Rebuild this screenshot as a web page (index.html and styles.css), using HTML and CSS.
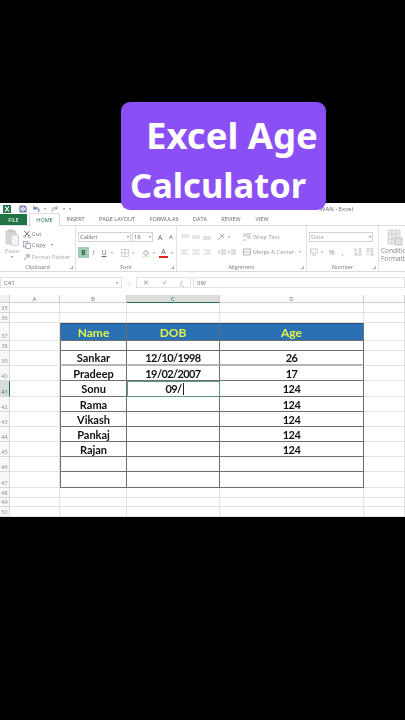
FILE: index.html
```html
<!DOCTYPE html>
<html lang="en">
<head>
<meta charset="utf-8">
<title>Excel Age Calculator</title>
<link rel="stylesheet" href="styles.css">
</head>
<body>
<div class="screen">
  <div class="banner">
    <div class="banner-one">Excel Age</div>
    <div class="banner-two">Calculator</div>
  </div>
  <main class="excel">
    <div class="titlebar">
      <svg class="xl" viewBox="0 0 8 8"><rect width="8" height="8" fill="#1f7246"/><path d="M2 1.5 6 6.5M6 1.5 2 6.5" stroke="#fff" stroke-width="1.2"/></svg>
      <svg class="qa" viewBox="0 0 8 8"><path d="M1 1h5l1 1v5H1z" fill="none" stroke="#51618a"/><path d="M2.5 1v2h3V1M2.5 7V5h3v2" fill="none" stroke="#51618a" stroke-width=".6"/></svg>
      <svg class="qa" viewBox="0 0 8 8"><path d="M2 1v3h3M2 4c1-2 4-2 5 1 0 1-.5 2-1 2" fill="none" stroke="#3f5f9a" stroke-width="1"/></svg>
      <span class="drop">▾</span>
      <svg class="qa faint" viewBox="0 0 8 8"><path d="M6 1v3H3M6 4C5 2 2 2 1 5c0 1 .5 2 1 2" fill="none" stroke="#8d9ab5" stroke-width="1"/></svg>
      <span class="drop">▾</span>
      <span class="drop">▾</span>
      <span class="doc-title">WAN - Excel</span>
    </div>
    <nav class="tabs">
      <span class="tab file">FILE</span>
      <span class="tab home">HOME</span>
      <span class="tab t-insert">INSERT</span>
      <span class="tab t-page">PAGE LAYOUT</span>
      <span class="tab t-form">FORMULAS</span>
      <span class="tab t-data">DATA</span>
      <span class="tab t-rev">REVIEW</span>
      <span class="tab t-view">VIEW</span>
    </nav>
    <section class="ribbon">
      <div class="group g-clip">
        <div class="group-body clip-body">
          <div class="paste">
            <svg class="paste-ico" viewBox="0 0 14 17"><rect x="1" y="2" width="10" height="13" fill="#d8d8d8" stroke="#bbb" stroke-width=".6"/><rect x="3.5" y="0.5" width="5" height="3" fill="#c4c4c4"/><rect x="6" y="6" width="7.5" height="10.5" fill="#f3f3f3" stroke="#bdbdbd" stroke-width=".6"/></svg>
            <span>Paste</span>
            <span class="drop">▾</span>
          </div>
          <div class="clip-list">
            <div class="clip-item"><svg class="mini" viewBox="0 0 8 8"><path d="M1.5 1 6 6M6.500 1 2 6" stroke="#6b6b6b" fill="none"/><circle cx="1.6" cy="6.6" r="1" fill="none" stroke="#6b6b6b" stroke-width=".6"/><circle cx="6.4" cy="6.6" r="1" fill="none" stroke="#6b6b6b" stroke-width=".6"/></svg><span>Cut</span></div>
            <div class="clip-item"><svg class="mini" viewBox="0 0 8 8"><rect x=".5" y=".5" width="4.5" height="5.5" fill="#eef" stroke="#8a93aa" stroke-width=".7"/><rect x="3" y="2.5" width="4.5" height="5" fill="#fff" stroke="#8a93aa" stroke-width=".7"/></svg><span>Copy</span><span class="drop">▾</span></div>
            <div class="clip-item off"><svg class="mini" viewBox="0 0 8 8"><path d="M1 7 4 3.500M3 1.500l3.500 3M5 1l2 2" stroke="#a9a9a9" stroke-width="1.1" fill="none"/></svg><span>Format Painter</span></div>
          </div>
        </div>
        <div class="group-label">Clipboard<i class="launch"></i></div>
      </div>
      <div class="group g-font">
        <div class="group-body stack">
          <div class="line">
            <span class="combo font-name">Calibri<span class="drop">▾</span></span>
            <span class="combo font-size">18<span class="drop">▾</span></span>
            <span class="grow-a">A<sup>ˆ</sup></span>
            <span class="grow-a small-a">A<sup>ˇ</sup></span>
          </div>
          <div class="line font-btns">
            <span class="btn bold">B</span>
            <span class="btn ital">I</span>
            <span class="btn under">U</span>
            <span class="drop">▾</span>
            <svg class="mini border-ico" viewBox="0 0 8 8"><path d="M.5.5h7v7h-7zM4 .5v7M.5 4h7" fill="none" stroke="#bdbdbd" stroke-width=".7"/></svg>
            <span class="drop">▾</span>
            <svg class="mini fill-ico" viewBox="0 0 8 8"><path d="M4 1 7 4 4 7 1 4z" fill="#e8e8e8" stroke="#a8a8a8" stroke-width=".7"/><rect y="7" width="8" height="1" fill="#e8e8c8"/></svg>
            <span class="drop">▾</span>
            <span class="font-color">A</span>
            <span class="drop">▾</span>
          </div>
        </div>
        <div class="group-label">Font<i class="launch"></i></div>
      </div>
      <div class="group g-align">
        <div class="group-body stack">
          <div class="line">
            <svg class="lines" viewBox="0 0 8 6"><path d="M0 1h8M0 3h8" stroke="#d0d0d0"/></svg>
            <svg class="lines" viewBox="0 0 8 6"><path d="M0 2h8M0 4h8" stroke="#d0d0d0"/></svg>
            <svg class="lines" viewBox="0 0 8 6"><path d="M0 3h8M0 5h8" stroke="#c4c4c4"/></svg>
            <svg class="mini orient" viewBox="0 0 8 8"><path d="M1 7 7 1M3 1l4 4" stroke="#a8a8a8" fill="none"/></svg>
            <span class="drop">▾</span>
            <svg class="mini wrap-ico" viewBox="0 0 8 8"><path d="M0 1h8M0 3h6c2 0 2 2 0 2H4M0 7h3" stroke="#a5a5a5" fill="none" stroke-width=".8"/></svg>
            <span class="off-text">Wrap Text</span>
          </div>
          <div class="line">
            <svg class="lines" viewBox="0 0 8 6"><path d="M0 1h8M0 3h5M0 5h8" stroke="#c8c8c8" stroke-width=".8"/></svg>
            <svg class="lines" viewBox="0 0 8 6"><path d="M0 1h8M1.500 3h5M0 5h8" stroke="#c8c8c8" stroke-width=".8"/></svg>
            <svg class="lines" viewBox="0 0 8 6"><path d="M0 1h8M3 3h5M0 5h8" stroke="#c8c8c8" stroke-width=".8"/></svg>
            <svg class="lines indent" viewBox="0 0 8 6"><path d="M3 1h5M3 3h5M3 5h5M2 1.500 0 3l2 1.500" stroke="#b0b0b0" stroke-width=".8" fill="none"/></svg>
            <svg class="lines indent2" viewBox="0 0 8 6"><path d="M3 1h5M3 3h5M3 5h5M0 1.500 2 3 0 4.500" stroke="#b0b0b0" stroke-width=".8" fill="none"/></svg>
            <svg class="mini merge-ico" viewBox="0 0 8 8"><path d="M.5 1h7v6h-7zM.5 4h7" fill="none" stroke="#9a9a9a" stroke-width=".7"/></svg>
            <span class="off-text">Merge &amp; Center</span>
            <span class="drop">▾</span>
          </div>
        </div>
        <div class="group-label">Alignment<i class="launch"></i></div>
      </div>
      <div class="group g-num">
        <div class="group-body stack">
          <div class="line">
            <span class="combo num-fmt">Date<span class="drop">▾</span></span>
          </div>
          <div class="line num-btns">
            <svg class="mini" viewBox="0 0 8 8"><rect x=".5" y="1" width="7" height="4" fill="none" stroke="#b5b5b5" stroke-width=".7"/><path d="M2 7h4" stroke="#c9c9a0"/></svg>
            <span class="drop">▾</span>
            <span class="pct">%</span>
            <span class="pct comma">,</span>
            <svg class="mini dec-one" viewBox="0 0 8 8"><path d="M0 2h3M1.500.5v3M5 .5h2v3H5zM1 5h2v2.500H1zM5 5h2v2.500H5z" fill="none" stroke="#b0b0b0" stroke-width=".6"/></svg>
            <svg class="mini dec-two" viewBox="0 0 8 8"><path d="M1 .5h2v3H1zM5 .5h2v3H5zM5 5h2v2.500H5zM0 6.200h3" fill="none" stroke="#b0b0b0" stroke-width=".6"/></svg>
          </div>
        </div>
        <div class="group-label">Number<i class="launch"></i></div>
      </div>
      <div class="group g-style">
        <svg class="cond-ico" viewBox="0 0 16 17"><rect x="1" y="1" width="12" height="14" fill="#ececec" stroke="#c0c0c0" stroke-width=".6"/><path d="M5 1v14M9 1v14M1 5h12M1 10h12" stroke="#c0c0c0" stroke-width=".6"/><rect x="8" y="9" width="7" height="7" fill="#e3e3e3" stroke="#a8a8a8" stroke-width=".6"/></svg>
        <span class="cond-text">Conditional<br>Formatting</span>
      </div>
    </section>
    <div class="formula">
      <div class="namebox"><span>C41</span><span class="drop">▾</span></div>
      <span class="dots">⋮</span>
      <div class="fx-btns">
        <span class="fx">✕</span>
        <span class="fx">✓</span>
        <span class="fx italic">f<sub>x</sub></span>
      </div>
      <div class="fbox">09/</div>
    </div>
    <div class="sheet">
      <div class="row h8 colheads"><div class="c corner"></div><div class="c">A</div><div class="c">B</div><div class="c active-col">C</div><div class="c">D</div><div class="c"></div></div>
      <div class="row h10"><div class="c rh">35</div><div class="c"></div><div class="c"></div><div class="c"></div><div class="c"></div><div class="c"></div></div>
      <div class="row h10"><div class="c rh">36</div><div class="c"></div><div class="c"></div><div class="c"></div><div class="c"></div><div class="c"></div></div>
      <div class="row h18"><div class="c rh">37</div><div class="c"></div><div class="c t th first">Name</div><div class="c t th">DOB</div><div class="c t th">Age</div><div class="c"></div></div>
      <div class="row h10"><div class="c rh">38</div><div class="c"></div><div class="c t first"></div><div class="c t"></div><div class="c t"></div><div class="c"></div></div>
      <div class="row h15 heavy"><div class="c rh">39</div><div class="c"></div><div class="c t first">Sankar</div><div class="c t num">12/10/1998</div><div class="c t num">26</div><div class="c"></div></div>
      <div class="row h15"><div class="c rh">40</div><div class="c"></div><div class="c t first">Pradeep</div><div class="c t num">19/02/2007</div><div class="c t num">17</div><div class="c"></div></div>
      <div class="row h16"><div class="c rh active-row">41</div><div class="c"></div><div class="c t first">Sonu</div><div class="c t num active"><span class="edit">09/</span></div><div class="c t num">124</div><div class="c"></div></div>
      <div class="row h15"><div class="c rh">42</div><div class="c"></div><div class="c t first">Rama</div><div class="c t"></div><div class="c t num">124</div><div class="c"></div></div>
      <div class="row h15"><div class="c rh">43</div><div class="c"></div><div class="c t first">Vikash</div><div class="c t"></div><div class="c t num">124</div><div class="c"></div></div>
      <div class="row h15"><div class="c rh">44</div><div class="c"></div><div class="c t first">Pankaj</div><div class="c t"></div><div class="c t num">124</div><div class="c"></div></div>
      <div class="row h15"><div class="c rh">45</div><div class="c"></div><div class="c t first">Rajan</div><div class="c t"></div><div class="c t num">124</div><div class="c"></div></div>
      <div class="row h15"><div class="c rh">46</div><div class="c"></div><div class="c t first"></div><div class="c t"></div><div class="c t"></div><div class="c"></div></div>
      <div class="row h16"><div class="c rh">47</div><div class="c"></div><div class="c t first"></div><div class="c t"></div><div class="c t"></div><div class="c"></div></div>
      <div class="row h10"><div class="c rh">48</div><div class="c"></div><div class="c"></div><div class="c"></div><div class="c"></div><div class="c"></div></div>
      <div class="row h9"><div class="c rh">49</div><div class="c"></div><div class="c"></div><div class="c"></div><div class="c"></div><div class="c"></div></div>
      <div class="row h10"><div class="c rh">50</div><div class="c"></div><div class="c"></div><div class="c"></div><div class="c"></div><div class="c"></div></div>
    </div>
  </main>
</div>
</body>
</html>
```
FILE: styles.css
```css
* { box-sizing: border-box; }
html, body { margin: 0; padding: 0; background: #000; }
.screen { position: relative; width: 405px; height: 720px; padding-top: 203px; background: #000; overflow: hidden; font-family: "Open Sans", "Liberation Sans", sans-serif; }

.banner { position: absolute; left: 121px; top: 102px; width: 205px; height: 108px; border-radius: 9px; background: #8b50f5; color: #fff; font-family: "Noto Sans", sans-serif; font-weight: 700; z-index: 2; }
.banner-one { font-size: 36.500px; line-height: 40px; padding: 13px 0 0 25px; white-space: nowrap; }
.banner-two { font-size: 34.500px; line-height: 40px; padding: 10px 0 0 9px; white-space: nowrap; }

.excel { height: 314px; background: #fff; display: flex; flex-direction: column; color: #777; font-size: 6px; filter: blur(.25px); }
.drop { display: inline-block; width: 3px; text-align: center; font-size: 4px; color: #888; line-height: 1; flex: none; }

.titlebar { height: 10px; display: flex; align-items: center; gap: 3px; padding: 1px 0 0 3px; flex: none; }
.xl { width: 8px; height: 8px; margin-right: 3px; }
.qa { width: 8px; height: 8px; margin-left: 2px; }
.doc-title { margin-left: auto; margin-right: 52px; font-size: 6px; color: #666; white-space: nowrap; }

.tabs { height: 13px; flex: none; display: flex; align-items: stretch; border-bottom: 1px solid #dcdcdc; font-size: 5.500px; color: #666; }
.tab { display: flex; align-items: center; justify-content: center; white-space: nowrap; flex: none; }
.file { width: 27px; margin-top: 1px; background: #217346; color: #fff; }
.home { width: 31px; margin-left: 2px; color: #217346; border: 1px solid #dcdcdc; border-bottom: 1px solid #fff; height: 14px; background: #fff; }
.t-insert { margin-left: 7px; width: 17px; }
.t-page { margin-left: 15px; width: 36px; }
.t-form { margin-left: 14px; width: 30px; }
.t-data { margin-left: 14px; width: 14px; }
.t-rev { margin-left: 14px; width: 20px; }
.t-view { margin-left: 14px; width: 14px; }

.ribbon { height: 46px; flex: none; display: flex; border-bottom: 1px solid #dcdcdc; }
.group { flex: none; display: flex; flex-direction: column; border-right: 1px solid #e2e2e2; }
.group-body { flex: 1; min-height: 0; }
.group-label { height: 9px; font-size: 5.500px; color: #777; display: flex; align-items: center; justify-content: center; position: relative; }
.launch { position: absolute; right: 2px; bottom: 2px; width: 3px; height: 3px; border-right: 1px solid #aaa; border-bottom: 1px solid #aaa; }
.g-clip { width: 76px; }
.g-font { width: 101px; }
.g-align { width: 130px; }
.g-num { width: 72px; }
.g-style { flex: 1; border-right: 0; padding: 3px 0 0 2px; overflow: hidden; display: flex; flex-direction: column; align-items: flex-start; }

.clip-body { display: flex; padding: 3px 0 0 4px; }
.paste { width: 16px; display: flex; flex-direction: column; align-items: center; color: #aaa; font-size: 5.500px; }
.paste-ico { width: 14px; height: 17px; margin-bottom: 1px; }
.clip-list { display: flex; flex-direction: column; margin-left: 3px; gap: 1px; }
.clip-item { display: flex; align-items: center; gap: 1px; height: 11px; white-space: nowrap; font-size: 5.800px; color: #6d6d6d; }
.clip-item .drop { margin-left: 4px; }
.clip-item.off { color: #aaa; font-size: 5.500px; }
.mini { width: 8px; height: 8px; flex: none; }

.stack { display: flex; flex-direction: column; gap: 5px; padding: 6px 0 0 2px; }
.line { display: flex; align-items: center; height: 10px; flex: none; white-space: nowrap; }
.combo { height: 10px; border: 1px solid #d4d4d4; display: flex; align-items: center; justify-content: space-between; padding: 0 1px; font-size: 5.800px; color: #666; }
.font-name { width: 53px; }
.font-size { width: 21px; margin-left: 1px; }
.grow-a { margin-left: 5px; font-size: 7px; color: #666; }
.grow-a sup { font-size: 4px; line-height: 0; }
.small-a { margin-left: 5px; font-size: 6px; }
.font-btns { height: 11px; }
.btn { width: 6px; height: 11px; display: flex; align-items: center; justify-content: center; font-size: 6.500px; color: #666; flex: none; }
.bold { width: 11px; background: #9fcdb5; color: #2e5a44; font-weight: 700; }
.ital { font-style: italic; margin-left: 1.500px; }
.under { text-decoration: underline; margin-left: 4.500px; }
.font-btns .drop { margin-left: 2px; color: #aaa; }
.under + .drop { margin-left: 3px; }
.border-ico { margin-left: 8px; }
.fill-ico { margin-left: 8px; }
.font-color { margin-left: 4px; width: 9px; text-align: center; font-size: 7px; line-height: 8px; color: #555; border-bottom: 2px solid #e02020; }

.g-align .stack { padding-left: 0; }
.lines { width: 8px; height: 6px; flex: none; margin-left: 3px; }
.lines:first-child { margin-left: 4px; }
.orient { margin-left: 6px; }
.g-align .drop { margin-left: 2px; color: #aaa; }
.wrap-ico { margin-left: 13px; }
.indent { margin-left: 7px; }
.indent2 { margin-left: 2px; }
.merge-ico { margin-left: 7px; }
.off-text { margin-left: 2px; font-size: 5.600px; color: #9a9a9a; }
.g-align .off-text + .drop { margin-left: 4px; }

.num-fmt { width: 64px; color: #aaa; }
.num-btns { color: #999; padding-left: 1px; }
.num-btns .drop { margin-left: 2px; color: #aaa; }
.pct { font-size: 7px; margin-left: 6px; color: #888; }
.comma { margin-left: 7px; }
.dec-one { margin-left: 10px; }
.dec-two { margin-left: 4px; }

.cond-ico { width: 16px; height: 17px; margin: 0 0 1px 6px; flex: none; }
.cond-text { font-size: 6.500px; line-height: 8px; color: #888; white-space: nowrap; }

.formula { height: 11px; margin-top: 5px; flex: none; display: flex; align-items: stretch; font-size: 6px; color: #666; }
.namebox { width: 122px; border: 1px solid #e2e2e2; display: flex; justify-content: space-between; align-items: center; padding: 0 3px; }
.dots { width: 14px; display: flex; align-items: center; justify-content: center; color: #bbb; }
.fx-btns { width: 55px; border: 1px solid #e2e2e2; display: flex; align-items: center; justify-content: space-around; color: #999; }
.fx { font-size: 6.500px; }
.italic { font-style: italic; font-family: "Liberation Serif", serif; }
.italic sub { font-size: 4px; line-height: 0; }
.fbox { margin-left: 2px; flex: 1; border: 1px solid #e2e2e2; padding: 0 3px; display: flex; align-items: center; }

.sheet { margin-top: 7px; flex: none; }
.row { display: grid; grid-template-columns: 10px 50px 67px 93px 144px 41px; }
.h8 { height: 8px; }
.h9 { height: 9px; }
.h10 { height: 10px; }
.h15 { height: 15px; }
.h16 { height: 16px; }
.h18 { height: 18px; }
.c { border-right: 1px solid #e2e2e2; border-bottom: 1px solid #e2e2e2; display: flex; align-items: center; justify-content: center; font-family: Lato, "Liberation Sans", sans-serif; font-size: 11px; font-weight: 700; color: #111; min-width: 0; overflow: hidden; }
.colheads .c { font-family: "Open Sans", sans-serif; font-size: 6px; font-weight: 400; color: #777; border-color: #cfcfcf; background: #fbfbfb; }
.colheads .corner { background: #f1f1f1; }
.colheads .active-col { background: #dcdcdc; border-bottom: 1px solid #217346; color: #217346; }
.rh { font-family: "Open Sans", sans-serif; font-size: 5.500px; font-weight: 400; color: #888; align-items: flex-end; line-height: 7px; background: #f8f8f8; border-color: #d8d8d8; }
.active-row { background: #dcdcdc; color: #217346; border-right: 1px solid #217346; }
.t { border-right: 1px solid #6e6e6e; border-bottom: 1px solid #6e6e6e; }
.first { border-left: 1px solid #6e6e6e; }
.num { letter-spacing: -.6px; }
.th { background: #2a70b5; color: #e3f24a; font-size: 12px; border-top: 1px solid #2b4d73; }
.heavy .t { border-bottom: 2px solid #b5b5b5; }
.active { border: 1px solid #5f9a80; }
.edit { border-right: 1px solid #222; padding-right: 1px; line-height: 12px; margin-left: 2px; }
```
